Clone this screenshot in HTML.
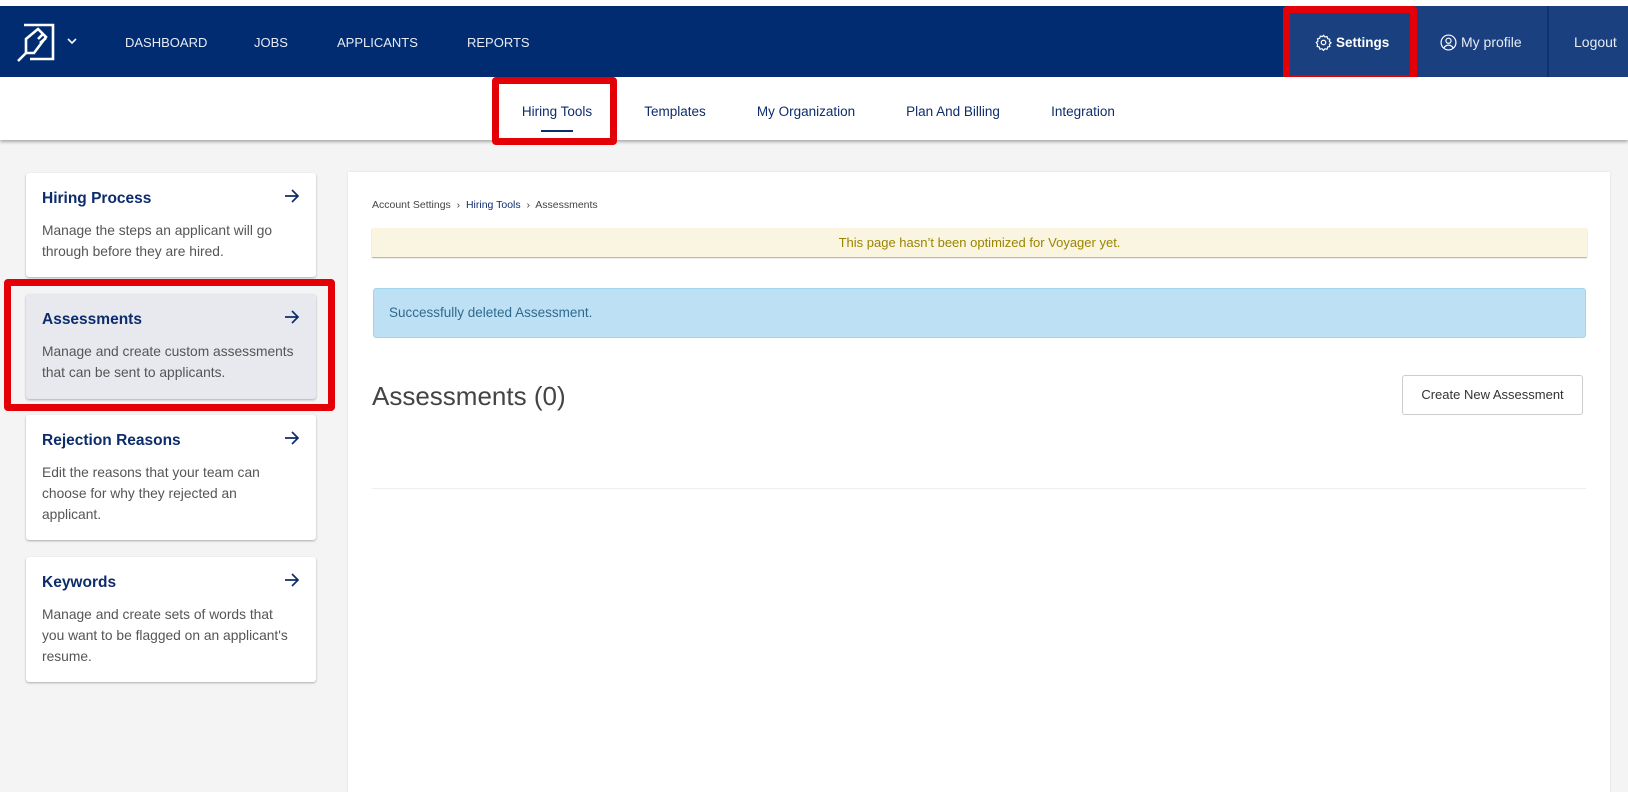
<!DOCTYPE html>
<html><head><meta charset="utf-8"><style>
*{box-sizing:border-box;margin:0;padding:0}
body{width:1628px;height:779px;overflow:hidden;background:#f4f4f5;font-family:"Liberation Sans",sans-serif;position:relative}
.abs{position:absolute}
.nav{left:0;top:6px;width:1628px;height:71px;background:#012c71}
.nav a{position:absolute;top:29px;color:#e6ebf4;font-size:13px}
.right{left:1290px;top:6px;width:338px;height:71px;background:#1a4080}
.sub{left:0;top:77px;width:1628px;height:63px;background:#fff;box-shadow:0 2px 3px rgba(0,0,0,.3)}
.sub span{position:absolute;top:27px;font-size:13.5px;color:#0e2d6c;transform:translateX(-50%);white-space:nowrap}
.red{border:7px solid #e30006;border-radius:4px}
.card{left:26px;width:290px;background:#fff;border-radius:3px;box-shadow:0 1px 2px rgba(0,0,0,.3);padding:19px 24px 16px 16px}
.card h3{font-size:15.5px;color:#0d2c6c;font-weight:bold;margin-top:-2px;margin-bottom:12px}
.card p{font-size:13.8px;color:#555;line-height:21px}
.arr{position:absolute;right:16px;top:15px}
</style></head><body>
<div class="abs" style="left:0;top:0;width:1628px;height:6px;background:#fff"></div>
<div class="abs nav">
 <svg class="abs" style="left:16px;top:17px" width="40" height="40" viewBox="0 0 40 40" fill="none" stroke="#fff" stroke-width="2.6"><path d="M8 2H37V36H14"/><path d="M2 38L10 30"/><path d="M10 30V16L22 6l8 8L18 30Z"/><path d="M22 16l5-5M24 20l6-5"/></svg>
 <svg class="abs" style="left:67px;top:32px" width="10" height="7" viewBox="0 0 10 7"><path d="M1 1l4 4 4-4" stroke="#fff" stroke-width="1.6" fill="none"/></svg>
 <a style="left:125px">DASHBOARD</a><a style="left:254px">JOBS</a><a style="left:337px">APPLICANTS</a><a style="left:467px">REPORTS</a>
</div>
<div class="abs right"></div>
<div class="abs" style="left:1547px;top:6px;width:2px;height:71px;background:#0d3270"></div>
<div class="abs" style="left:1315px;top:34px;color:#fff;font-size:13.5px;font-weight:bold">
 <svg style="vertical-align:-4px;margin-right:4px" width="17" height="17" viewBox="0 0 24 24" fill="none" stroke="#fff" stroke-width="1.7"><circle cx="12" cy="12" r="3.2"/><path d="M12 1.8l2 2.4 3-.6.9 3 3 .9-.6 3 2.4 2-2.4 2 .6 3-3 .9-.9 3-3-.6-2 2.4-2-2.4-3 .6-.9-3-3-.9.6-3L1.8 12l2.4-2-.6-3 3-.9.9-3 3 .6z"/></svg>Settings</div>
<div class="abs" style="left:1440px;top:34px;color:#e6ebf4;font-size:14px">
 <svg style="vertical-align:-4px;margin-right:4px" width="17" height="17" viewBox="0 0 24 24" fill="none" stroke="#fff" stroke-width="1.7"><circle cx="12" cy="12" r="10.5"/><circle cx="12" cy="9.5" r="3.6"/><path d="M5.5 19.5c2-3 4-3.8 6.5-3.8s4.5.8 6.5 3.8"/></svg>My profile</div>
<div class="abs" style="left:1574px;top:34px;color:#e6ebf4;font-size:14px">Logout</div>
<div class="abs red" style="left:1283px;top:6px;width:134px;height:76px"></div>
<div class="abs sub">
 <span style="left:557px">Hiring Tools</span>
 <div class="abs" style="left:541px;top:53px;width:32px;height:1.5px;background:#0e2d6c"></div>
 <span style="left:675px">Templates</span><span style="left:806px">My Organization</span><span style="left:953px">Plan And Billing</span><span style="left:1083px">Integration</span>
</div>
<div class="abs red" style="left:492px;top:77px;width:125px;height:68px"></div>

<div class="abs card" style="top:173px;height:104px"><h3>Hiring Process</h3><p>Manage the steps an applicant will go through before they are hired.</p><svg class="arr" width="16" height="16" viewBox="0 0 16 16" fill="none" stroke="#0d2c6c" stroke-width="1.7"><path d="M1 8h13M8 2l6 6-6 6"/></svg></div>
<div class="abs card" style="top:294px;height:105px;background:#e8e9ee;padding-right:8px"><h3>Assessments</h3><p style="white-space:nowrap">Manage and create custom assessments<br>that can be sent to applicants.</p><svg class="arr" width="16" height="16" viewBox="0 0 16 16" fill="none" stroke="#0d2c6c" stroke-width="1.7"><path d="M1 8h13M8 2l6 6-6 6"/></svg></div>
<div class="abs red" style="left:4px;top:279px;width:331px;height:132px"></div>
<div class="abs card" style="top:415px;height:125px"><h3>Rejection Reasons</h3><p>Edit the reasons that your team can choose for why they rejected an applicant.</p><svg class="arr" width="16" height="16" viewBox="0 0 16 16" fill="none" stroke="#0d2c6c" stroke-width="1.7"><path d="M1 8h13M8 2l6 6-6 6"/></svg></div>
<div class="abs card" style="top:557px;height:125px"><h3>Keywords</h3><p>Manage and create sets of words that you want to be flagged on an applicant's resume.</p><svg class="arr" width="16" height="16" viewBox="0 0 16 16" fill="none" stroke="#0d2c6c" stroke-width="1.7"><path d="M1 8h13M8 2l6 6-6 6"/></svg></div>

<div class="abs" style="left:348px;top:172px;width:1262px;height:620px;background:#fff;box-shadow:0 0 2px rgba(0,0,0,.1)"></div>
<div class="abs" style="left:372px;top:199px;font-size:10.5px;color:#444">Account Settings &nbsp;›&nbsp; <span style="color:#0e2d6c">Hiring Tools</span> &nbsp;›&nbsp; Assessments</div>
<div class="abs" style="left:372px;top:228px;width:1215px;height:29px;background:#faf5e0;box-shadow:0 1px 1px rgba(0,0,0,.35);text-align:center;line-height:29px;font-size:13px;color:#9a8400">This page hasn’t been optimized for Voyager yet.</div>
<div class="abs" style="left:373px;top:288px;width:1213px;height:50px;background:#bde0f4;border:1px solid #a3d4ee;border-radius:3px;padding-left:15px;line-height:48px;font-size:13.5px;color:#2f6a8e">Successfully deleted Assessment.</div>
<div class="abs" style="left:372px;top:381px;font-size:26px;color:#444">Assessments (0)</div>
<div class="abs" style="left:1402px;top:375px;width:181px;height:40px;border:1px solid #ccc;border-radius:3px;background:#fff;text-align:center;line-height:38px;font-size:13px;color:#333">Create New Assessment</div>
<div class="abs" style="left:372px;top:488px;width:1214px;height:1px;background:#eee"></div>
</body></html>
